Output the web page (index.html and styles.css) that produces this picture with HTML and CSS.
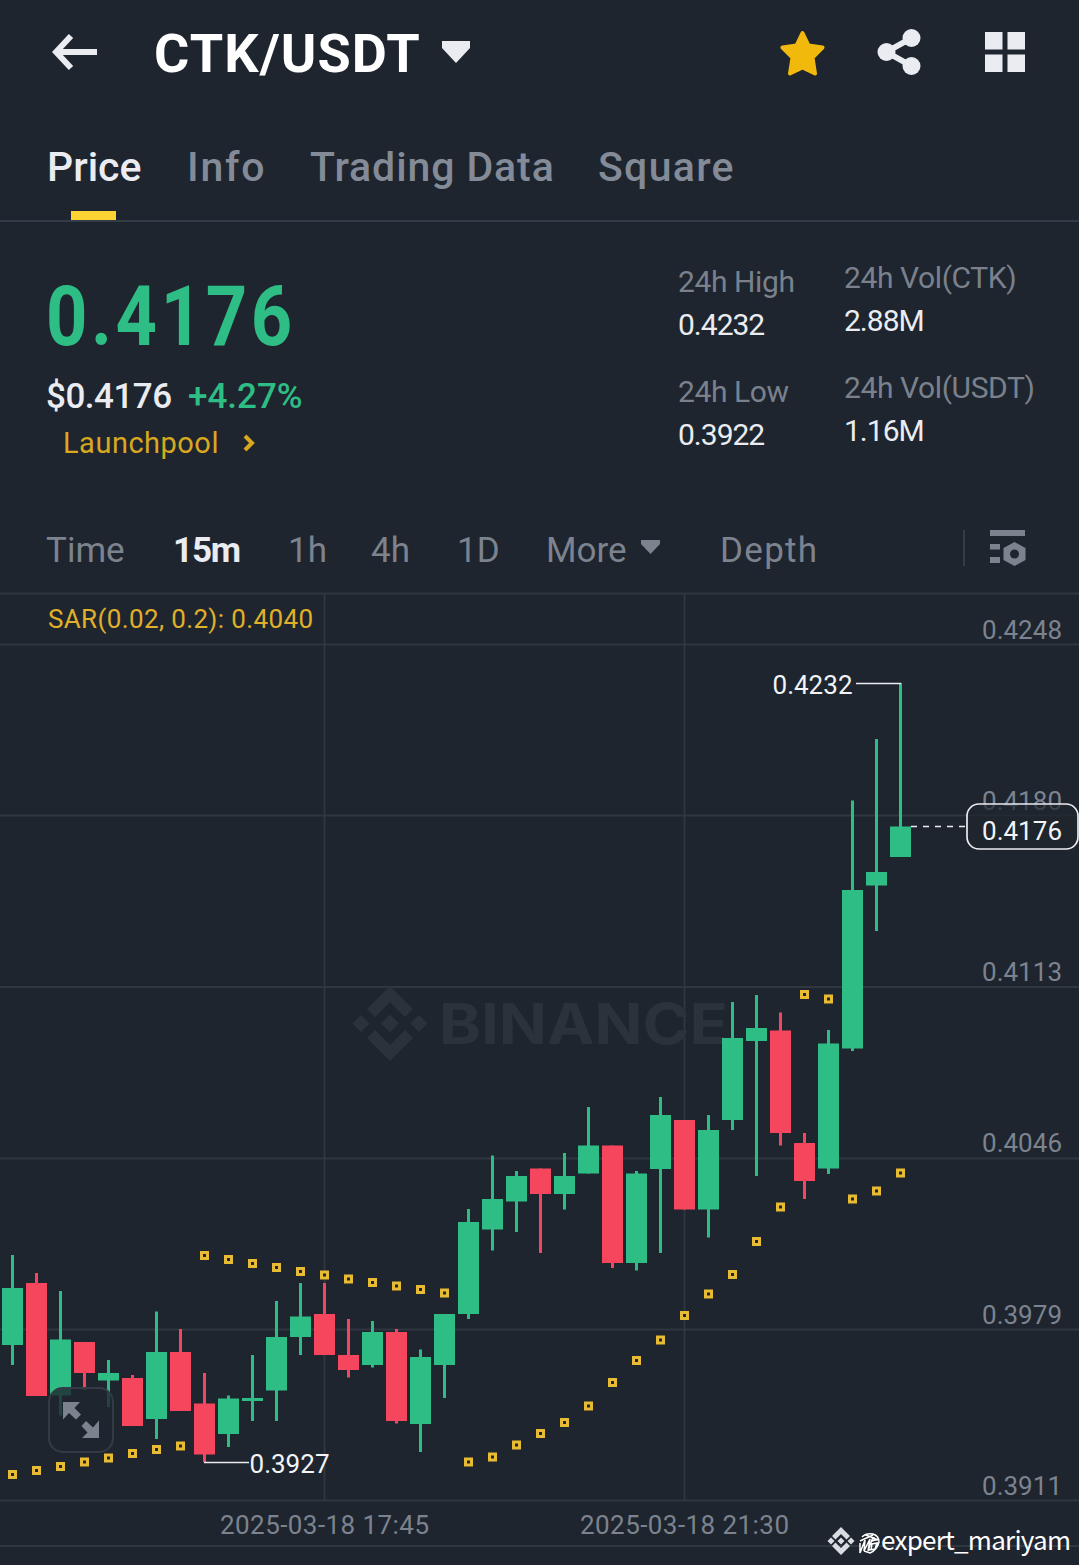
FILE: index.html
```html
<!DOCTYPE html>
<html lang="en">
<head>
  <meta charset="UTF-8" />
  <meta name="viewport" content="width=device-width, initial-scale=1.0"/>
  <title>CTK/USDT</title>
  <link rel="stylesheet" href="styles.css">
</head>
<body>

  <header class="topbar">
    <svg class="back" viewBox="0 0 46 38" width="46" height="38">
      <path d="M19 3 L4 19 L19 35 M4 19 H45" fill="none" stroke="#eaecf1" stroke-width="6"/>
    </svg>
    <h1 class="pair">CTK/USDT</h1>
    <svg class="pair-caret" viewBox="0 0 28 22" width="28" height="22">
      <path d="M0 0 H28 V7 L14 22 L0 7 Z" fill="#eaecf1"/>
    </svg>
    <div class="actions">
      <svg viewBox="0 0 46 48" width="46" height="48">
        <path d="M23.500 5 L29.500 17.500 L43.500 19.500 L33.500 29.500 L36 45.500 L23.500 39.500 L11 45.500 L13.500 29.500 L3.500 19.500 L17.500 17.500 Z" fill="#f0b90b" stroke="#f0b90b" stroke-width="4" stroke-linejoin="round"/>
      </svg>
      <svg viewBox="0 0 44 46" width="44" height="46">
        <path d="M34.500 9 L9.500 23 L34.500 37" fill="none" stroke="#eaecf1" stroke-width="6"/>
        <circle cx="34.500" cy="9" r="9" fill="#eaecf1"/>
        <circle cx="9.500" cy="23" r="9" fill="#eaecf1"/>
        <circle cx="34.500" cy="37" r="9" fill="#eaecf1"/>
      </svg>
      <svg viewBox="0 0 40 40" width="40" height="40">
        <path d="M0 0H17.500V17.500H0Z M22.500 0H40V17.500H22.500Z M0 22.500H17.500V40H0Z M22.500 22.500H40V40H22.500Z" fill="#eaecf1"/>
      </svg>
    </div>
  </header>

  <nav class="tabs">
    <a class="tab active t-price">Price</a>
    <a class="tab t-info">Info</a>
    <a class="tab t-data">Trading Data</a>
    <a class="tab t-square">Square</a>
  </nav>

  <section class="ticker">
    <div class="quote">
      <div class="last">0.4176</div>
      <div class="sub"><span class="usd">$0.4176</span><span class="change">+4.27%</span></div>
      <div class="launchpool">
        <span>Launchpool</span>
        <svg viewBox="0 0 12 18" width="12" height="18">
          <path d="M2 2 L9 9 L2 16" fill="none" stroke="#d8a920" stroke-width="4"/>
        </svg>
      </div>
    </div>
    <div class="stats">
      <div class="stat-col">
        <div class="label">24h High</div>
        <div class="value">0.4232</div>
        <div class="label">24h Low</div>
        <div class="value">0.3922</div>
      </div>
      <div class="stat-col vol">
        <div class="label">24h Vol(CTK)</div>
        <div class="value">2.88M</div>
        <div class="label">24h Vol(USDT)</div>
        <div class="value">1.16M</div>
      </div>
    </div>
  </section>

  <nav class="frames">
    <span class="frame f-time">Time</span>
    <span class="frame f-15m active">15m</span>
    <span class="frame f-1h">1h</span>
    <span class="frame f-4h">4h</span>
    <span class="frame f-1d">1D</span>
    <span class="frame f-more">More</span>
    <svg class="more-caret" viewBox="0 0 19 14" width="19" height="14">
      <path d="M0 0 H19 V4 L9.500 14 L0 4 Z" fill="#7c838f"/>
    </svg>
    <span class="frame f-depth">Depth</span>
    <span class="divider"></span>
    <svg class="settings" viewBox="0 0 36 36" width="36" height="36">
      <path d="M0 0H35V6H0Z M0 14H10V19.500H0Z M0 27H10V33H0Z" fill="#7c838f"/>
      <path d="M24.500 12 L35.500 18 V30 L24.500 36 L13.500 30 V18 Z" fill="#7c838f"/>
      <circle cx="24.500" cy="24" r="4.500" fill="#1e252e"/>
    </svg>
  </nav>

  <svg class="chart" id="chart" viewBox="0 592 1079 973" width="1079" height="973">
    <g id="grid"></g>

    <g class="watermark">
      <path d="M390 986 L413 1009 L405 1017 L390 1002 L375 1017 L367 1009 Z"/>
      <path d="M390 1061 L413 1038 L405 1030 L390 1045 L375 1030 L367 1038 Z"/>
      <path d="M390 1014.500 L399 1023.500 L390 1032.500 L381 1023.500 Z"/>
      <path d="M361 1015 L369.500 1023.500 L361 1032 L352.500 1023.500 Z"/>
      <path d="M419 1015 L427.500 1023.500 L419 1032 L410.500 1023.500 Z"/>
      <text x="439" y="1043.500" textLength="289" lengthAdjust="spacingAndGlyphs">BINANCE</text>
    </g>

    <text class="sar-label" x="48" y="628" textLength="265">SAR(0.02, 0.2): 0.4040</text>

    <g id="candles"></g>
    <g id="sar"></g>

    <!-- high / low markers -->
    <path class="marker" d="M856 683.500 H901 M204 1462.500 H249"/>
    <text class="price" x="772.500" y="694" textLength="80">0.4232</text>
    <text class="price" x="249.500" y="1473" textLength="80">0.3927</text>

    <!-- axis labels -->
    <g class="axis">
      <text x="982" y="639" textLength="80">0.4248</text>
      <text x="982" y="810" textLength="80">0.4180</text>
      <text x="982" y="981" textLength="80">0.4113</text>
      <text x="982" y="1152" textLength="80">0.4046</text>
      <text x="982" y="1324" textLength="80">0.3979</text>
      <text x="982" y="1495" textLength="80">0.3911</text>
      <text x="220" y="1534" textLength="209">2025-03-18 17:45</text>
      <text x="580" y="1534" textLength="209">2025-03-18 21:30</text>
    </g>

    <!-- current price -->
    <path class="marker" d="M911 826.500 H966" stroke-dasharray="6 6"/>
    <rect class="tag" x="967" y="804" width="111" height="45" rx="12"/>
    <text class="price" x="982" y="840" textLength="80">0.4176</text>

    <!-- fullscreen button -->
    <rect class="full" x="49" y="1388" width="64" height="64" rx="14"/>
    <path class="full-icon" d="M63 1402 H80 L74.500 1408 L81 1414.500 L76 1419.500 L69 1413 L63 1419.500 Z M99 1438 H82 L87.500 1432.500 L81.500 1426 L86 1421 L93 1427.500 L99 1420.500 Z"/>

    <!-- author signature -->
    <g class="sign">
      <g fill="#d9dce1">
        <path d="M841 1527 L850 1536 L846.500 1539.500 L841 1534 L835.500 1539.500 L832 1536 Z"/>
        <path d="M841 1555 L850 1546 L846.500 1542.500 L841 1548 L835.500 1542.500 L832 1546 Z"/>
        <path d="M841 1537.500 L844.500 1541 L841 1544.500 L837.500 1541 Z"/>
        <path d="M831 1537.500 L834.500 1541 L831 1544.500 L827.500 1541 Z"/>
        <path d="M851 1537.500 L854.500 1541 L851 1544.500 L847.500 1541 Z"/>
      </g>
      <path class="scribble" d="M862 1537 Q866 1533 873 1534 Q879 1536 879 1542 Q877 1550 870 1553 L864 1551 M860 1541 L873 1535 M860 1543 V1553 L865 1540 L864 1551 L870 1539 L868 1551 L873 1537 M866 1535 L878 1540 M872 1541 L879 1539 M871 1550 L872 1544 L877 1543 L875 1549 L869 1550 M874 1537 V1541"/>
      <text x="881" y="1550" textLength="190">expert_mariyam</text>
    </g>
  </svg>

  <script src="chart.js"></script>
</body>
</html>
```
FILE: styles.css
```css
* {
  box-sizing: border-box;
}

body {
  margin: 0;
  width: 1079px;
  height: 1565px;
  overflow: hidden;
  background: #1e252e;
  color: #eaecf1;
  font-family: Roboto, 'Open Sans', sans-serif;
}

svg {
  display: block;
  flex: none;
}

/* top bar */
.topbar {
  display: flex;
  align-items: center;
  height: 104px;
  padding: 0 54px 0 52px;
}

.pair {
  margin: 4px 0 0 56px;
  width: 266px;
  font-size: 54px;
  font-weight: 700;
  line-height: 64px;
  letter-spacing: 1.1px;
  color: #fff;
  white-space: nowrap;
}

.pair-caret {
  margin-left: 22px;
}

.actions {
  display: flex;
  align-items: center;
  margin-left: auto;
}

.actions svg + svg {
  margin-left: 52px;
}

.actions svg:last-child {
  margin-left: 64px;
}

/* tabs */
.tabs {
  display: flex;
  height: 118px;
  padding: 34px 0 0 47px;
  border-bottom: 2px solid #333b46;
}

.tab {
  font-size: 41px;
  font-weight: 500;
  line-height: 58px;
  letter-spacing: 1px;
  color: #848b98;
  white-space: nowrap;
}

.t-price { width: 140px; }
.t-info { width: 123px; letter-spacing: 1.8px; }
.t-data { width: 288px; letter-spacing: 0.9px; }
.t-square { letter-spacing: 1.3px; }

.tab.active {
  color: #eaecf1;
  letter-spacing: 0;
}

.tab.active::after {
  content: '';
  display: block;
  width: 45px;
  height: 9px;
  margin: 15px 0 0 24px;
  background: #fcd535;
}

/* ticker */
.ticker {
  display: flex;
  justify-content: space-between;
  height: 284px;
  padding: 38px 45px 0 46px;
}

/* narrow tall digits */
.last {
  width: 300px;
  height: 112px;
  font-size: 84px;
  font-weight: 700;
  line-height: 114px;
  letter-spacing: 4.2px;
  color: #2ebd85;
  transform: scaleX(0.86);
  transform-origin: 0 0;
}

.sub {
  display: flex;
  gap: 17px;
  height: 48px;
  font-size: 35px;
  font-weight: 500;
  line-height: 50px;
}

.usd {
  width: 125px;
  letter-spacing: -0.5px;
}

.change {
  color: #2ebd85;
}

.launchpool {
  display: flex;
  align-items: center;
  gap: 24px;
  padding-left: 17px;
  font-size: 29px;
  line-height: 46px;
  letter-spacing: 0.5px;
  color: #d8a920;
}

.stats {
  display: flex;
  width: 356px;
  font-size: 30px;
  padding: 1px 0 0 0;
}

.stat-col {
  width: 166px;
}

.vol {
  width: 190px;
  margin-top: -4px;
}

.label {
  height: 42px;
  line-height: 42px;
  letter-spacing: -0.4px;
  color: #7a818d;
  white-space: nowrap;
}

.value {
  height: 68px;
  line-height: 44px;
  letter-spacing: -1px;
}

/* time frames */
.frames {
  display: flex;
  align-items: center;
  height: 86px;
  padding: 0 53px 0 46px;
  font-size: 35px;
  color: #7c838f;
}

.frame {
  padding-top: 2px;
}

.frame.active {
  color: #eaecf1;
  font-weight: 700;
  letter-spacing: -1.2px;
}

.f-time { width: 127px; }
.f-15m { width: 115px; }
.f-1h { width: 83px; }
.f-4h { width: 86px; }
.f-1d { width: 89px; }
.f-more { width: 95px; }
.f-depth { letter-spacing: 1.3px; }

.more-caret {
  margin: -4px 60px 0 0;
}

.divider {
  width: 2px;
  height: 36px;
  margin: -3px 25px 0 auto;
  background: #333b46;
}

.settings {
  margin-top: -2px;
}

/* chart */
.chart text {
  font-size: 26px;
}

.grid-line {
  stroke: #303741;
  stroke-width: 1.8;
}

.watermark {
  fill: #2b323c;
}

.chart .watermark text {
  font-family: Inter, sans-serif;
  font-size: 56px;
  font-weight: 700;
}

.sar-label {
  fill: #e0b02a;
}

.up { fill: #2ebd85; }
.down { fill: #f6465d; }

.sar-dot {
  fill: #1e252e;
  stroke: #e8bb35;
  stroke-width: 3;
}

.marker {
  fill: none;
  stroke: #eaecf1;
  stroke-width: 1.6;
}

.price {
  fill: #f2f4f8;
}

.axis {
  fill: #7c838f;
}

.tag {
  fill: #1e252e;
  fill-opacity: 0.7;
  stroke: #eaecf1;
  stroke-width: 1.7;
}

.full {
  fill: #1e252e;
  fill-opacity: 0.8;
  stroke: #343b46;
  stroke-width: 2;
}

.full-icon {
  fill: #7c838f;
}

.scribble {
  fill: none;
  stroke: #fff;
  stroke-width: 1.5;
}

.chart .sign text {
  fill: #fff;
  font-family: 'Noto Sans CJK SC', 'Noto Sans', sans-serif;
  font-size: 26px;
}
```
FILE: chart.js
```js
// candles: [direction, high, top of body, bottom of body, low]
const candles = [
  ['up', 1255, 1288, 1345, 1365], ['down', 1273, 1283, 1396, 1396],
  ['up', 1291, 1339.5, 1395.5, 1415.5], ['down', 1342, 1342, 1373, 1390],
  ['up', 1360, 1373, 1380.5, 1407], ['down', 1375, 1378, 1426, 1426],
  ['up', 1311.5, 1352, 1419, 1439], ['down', 1329, 1352, 1411, 1411],
  ['down', 1373, 1403.5, 1454.5, 1462], ['up', 1395.5, 1398.5, 1434, 1447],
  ['up', 1355, 1398, 1401, 1421], ['up', 1301, 1337, 1390.5, 1421],
  ['up', 1283, 1316.5, 1337, 1355], ['down', 1283, 1314, 1355, 1355],
  ['down', 1319, 1355, 1370, 1377.5], ['up', 1321, 1332, 1365, 1367.5],
  ['down', 1329, 1332, 1421, 1423.5], ['up', 1349.5, 1357, 1424, 1452],
  ['up', 1314, 1314, 1365, 1398], ['up', 1209, 1222, 1314, 1319],
  ['up', 1155.5, 1199, 1229.5, 1250.5], ['up', 1171, 1176, 1201.5, 1232],
  ['down', 1168.5, 1168.5, 1194, 1253], ['up', 1153, 1176, 1194, 1209.5],
  ['up', 1107, 1145.5, 1173.5, 1173.5], ['down', 1145.5, 1145.5, 1263, 1268],
  ['up', 1171, 1173.5, 1263, 1270.5], ['up', 1097, 1115, 1169, 1253],
  ['down', 1120, 1120, 1209.5, 1209.5], ['up', 1115, 1130, 1209.5, 1237.5],
  ['up', 1002, 1038, 1120, 1130], ['up', 995, 1028, 1041, 1176],
  ['down', 1012.5, 1030.5, 1133, 1145.5], ['down', 1133, 1143, 1181, 1199],
  ['up', 1030, 1043.5, 1168.5, 1174], ['up', 800.5, 890, 1048.5, 1051],
  ['up', 739, 872, 885.5, 931], ['up', 683, 826.5, 857, 857]
];

const sar = [
  1474.5, 1470.5, 1466.5, 1462, 1458, 1453.5, 1449.5, 1446, 1255.5, 1259.5,
  1263.5, 1267.5, 1271.5, 1275, 1279, 1282.5, 1286, 1289.5, 1293, 1462,
  1457, 1445, 1433.5, 1422.5, 1406, 1382.5, 1360.5, 1340, 1315.5, 1294,
  1274.5, 1241.5, 1207, 994.5, 999, 1199, 1191, 1173
];

const step = 24;
const firstX = 12.5;

function add(parent, tag, attrs) {
  const el = document.createElementNS('http://www.w3.org/2000/svg', tag);
  for (const key in attrs) el.setAttribute(key, attrs[key]);
  document.getElementById(parent).appendChild(el);
}

function line(x1, y1, x2, y2) {
  add('grid', 'line', { class: 'grid-line', x1, y1, x2, y2 });
}

[593.5, 644.5, 815.5, 987, 1158.5, 1329.5, 1500.5, 1546].forEach(y => line(0, y, 1079, y));
[324.5, 684.5].forEach(x => line(x, 593, x, 1501));

candles.forEach(([dir, high, top, bottom, low], i) => {
  const x = firstX + i * step;
  add('candles', 'rect', { class: dir, x: x - 1.5, y: high, width: 3, height: low - high });
  add('candles', 'rect', { class: dir, x: x - 10.5, y: top, width: 21, height: bottom - top });
});

sar.forEach((y, i) => {
  add('sar', 'rect', { class: 'sar-dot', x: firstX + i * step - 3, y: y - 3, width: 6, height: 6 });
});
```
